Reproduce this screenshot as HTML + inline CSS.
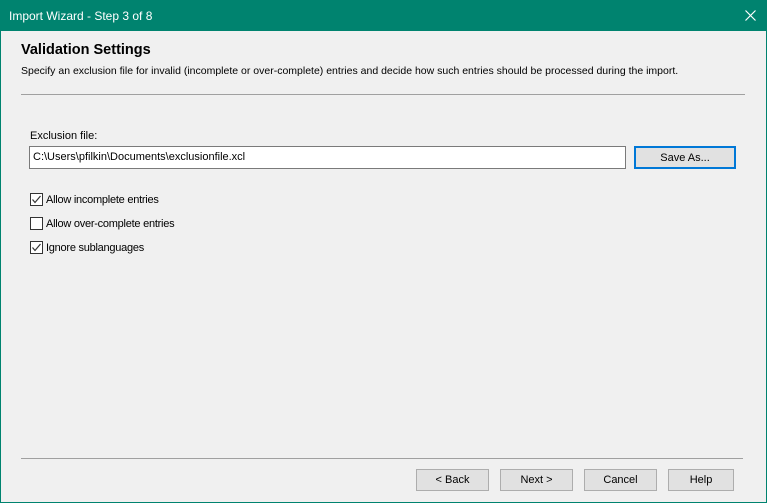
<!DOCTYPE html>
<html><head><meta charset="utf-8"><style>
*{margin:0;padding:0;box-sizing:border-box}
body{width:767px;height:503px;overflow:hidden;background:#f0f0f0;font-family:"Liberation Sans",sans-serif;font-size:11px;color:#000;position:relative}
.frame{position:absolute;left:0;top:0;width:767px;height:503px;border:1px solid #00836f;border-top:none}
.title{position:absolute;left:0;top:0;width:767px;height:31px;background:#00836f;color:#fff;font-size:12px}
.title span{position:absolute;left:9px;top:9px}
.a{position:absolute;white-space:nowrap}
.sep{position:absolute;height:1px;background:#a0a0a0}
.btn{position:absolute;height:22px;background:#e1e1e1;border:1px solid #adadad;text-align:center;line-height:21px}
.cb{position:absolute;left:30px;width:13px;height:13px;border:1px solid #333;background:#fff}
.lb{letter-spacing:-0.25px}
</style></head><body>
<div class="frame"></div>
<div class="title"><span>Import Wizard - Step 3 of 8</span>
<svg style="position:absolute;left:745px;top:10px" width="11" height="11" viewBox="0 0 11 11"><path d="M0.5 0.5L10.5 10.5M10.5 0.5L0.5 10.5" stroke="#fff" stroke-width="1.2"/></svg></div>
<div class="a" style="left:21px;top:42px;font-size:14.5px;font-weight:bold">Validation Settings</div>
<div class="a" style="left:21px;top:65px;font-size:10.5px">Specify an exclusion file for invalid (incomplete or over-complete) entries and decide how such entries should be processed during the import.</div>
<div class="sep" style="left:21px;top:94px;width:724px"></div>
<div class="a" style="left:30px;top:130px">Exclusion file:</div>
<div class="a" style="left:29px;top:146px;width:597px;height:23px;background:#fff;border:1px solid #7a7a7a;padding:4px 0 0 3px">C:\Users\pfilkin\Documents\exclusionfile.xcl</div>
<div class="btn" style="left:634px;top:146px;width:102px;height:23px;border:2px solid #0078d7;line-height:20px">Save As...</div>
<div class="cb" style="top:193px"><svg width="11" height="11" viewBox="0 0 11 11" style="position:absolute;left:0;top:0"><path d="M1.5 5.5L4 8.5L9.5 2" stroke="#333" stroke-width="1.2" fill="none"/></svg></div>
<div class="a lb" style="left:46px;top:194px">Allow incomplete entries</div>
<div class="cb" style="top:217px"></div>
<div class="a lb" style="left:46px;top:218px">Allow over-complete entries</div>
<div class="cb" style="top:241px"><svg width="11" height="11" viewBox="0 0 11 11" style="position:absolute;left:0;top:0"><path d="M1.5 5.5L4 8.5L9.5 2" stroke="#333" stroke-width="1.2" fill="none"/></svg></div>
<div class="a lb" style="left:46px;top:242px">Ignore sublanguages</div>
<div class="sep" style="left:21px;top:458px;width:722px"></div>
<div class="btn" style="left:416px;top:469px;width:73px">&lt; Back</div>
<div class="btn" style="left:500px;top:469px;width:73px">Next &gt;</div>
<div class="btn" style="left:584px;top:469px;width:73px">Cancel</div>
<div class="btn" style="left:668px;top:469px;width:66px">Help</div>
</body></html>
